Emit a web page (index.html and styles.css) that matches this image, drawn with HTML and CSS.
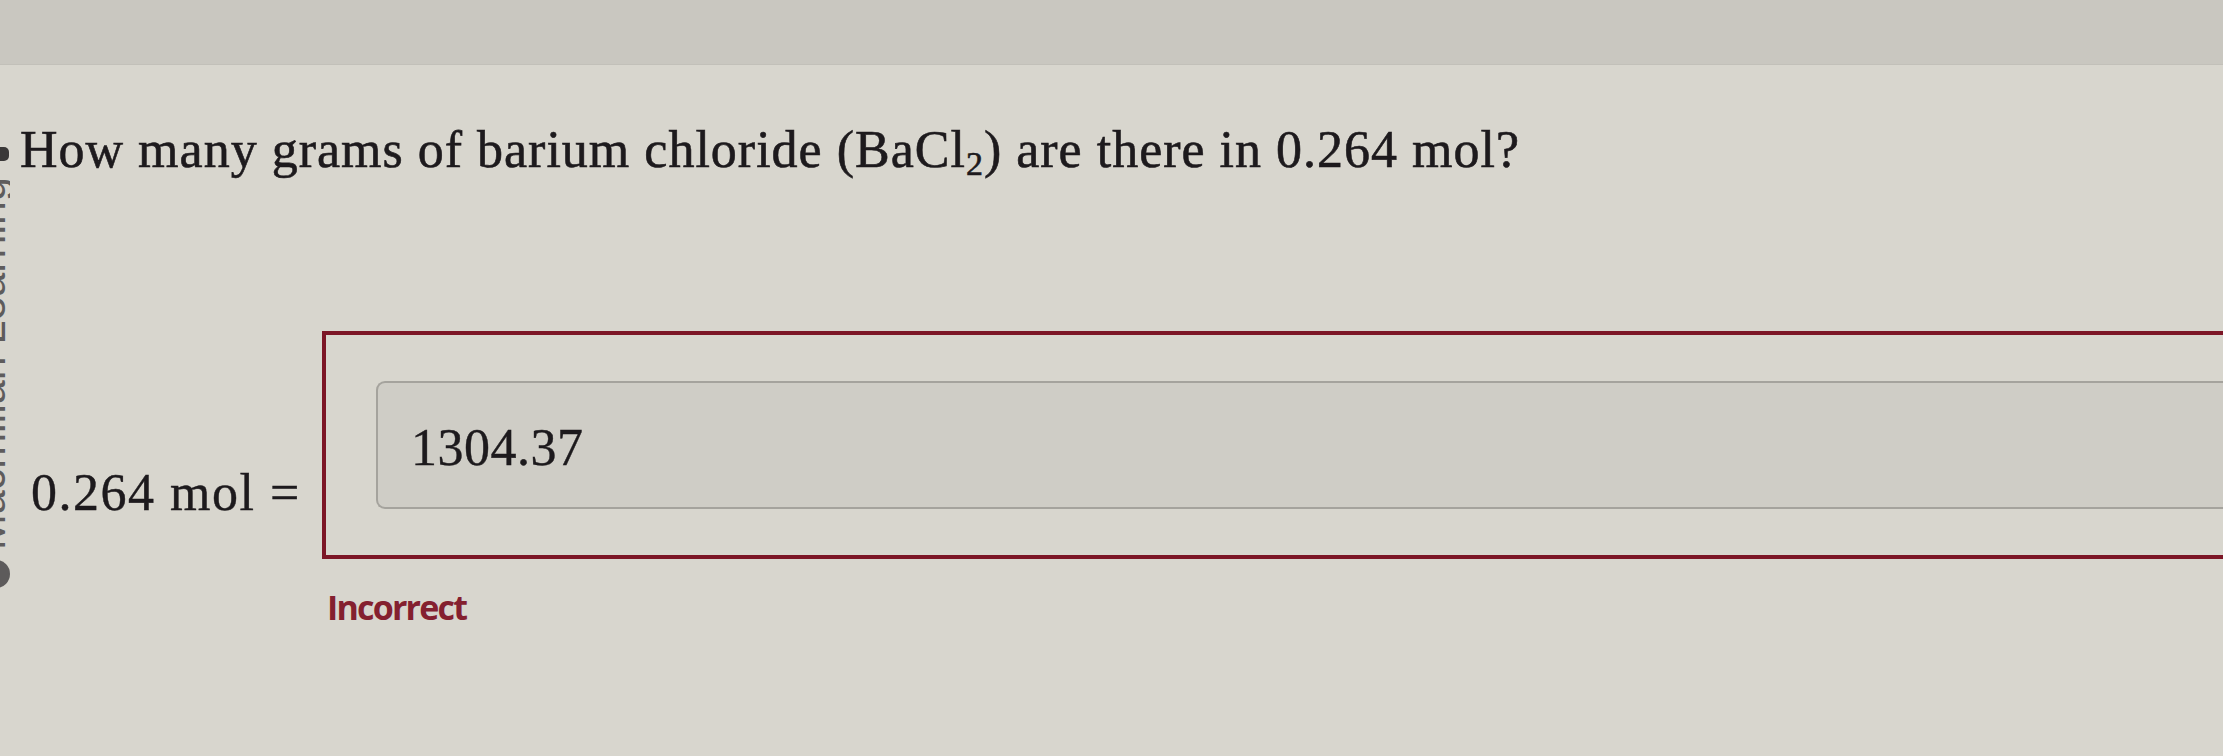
FILE: index.html
```html
<!DOCTYPE html>
<html lang="en">
<head>
<meta charset="utf-8">
<title>Question</title>
<link rel="stylesheet" href="styles.css">
</head>
<body>
<div class="page">
  <div class="topband"></div>
  <div class="content">
    <aside class="edge">
      <span class="edge-mark"></span>
      <span class="edge-text">Macmillan Learning</span>
      <span class="edge-dot"></span>
    </aside>
    <main class="question">
      <p class="prompt">How many grams of barium chloride (BaCl<sub>2</sub>) are there in 0.264 mol?</p>
      <div class="equation">
        <span class="lhs">0.264 mol =</span>
        <div class="answer">
          <div class="answer-box">
            <div class="field">1304.37</div>
          </div>
          <div class="feedback">Incorrect</div>
        </div>
      </div>
    </main>
  </div>
</div>
</body>
</html>
```
FILE: styles.css
```css
html, body {
  margin: 0;
  padding: 0;
  height: 100%;
  overflow: hidden;
  background: #d8d6ce;
}
.page {
  width: 2223px;
  height: 756px;
  overflow: hidden;
  background: #d8d6ce;
  font-family: "Liberation Serif", "Times New Roman", serif;
  color: #1d1a1d;
}
.topband {
  height: 64px;
  background: #c9c7c0;
  border-bottom: 1px solid #c2c0b9;
}
.content {
  display: flex;
  height: 691px;
}
.edge {
  width: 10px;
  flex: none;
  display: flex;
  flex-direction: column;
  align-items: flex-start;
  overflow: hidden;
  padding-top: 82px;
}
.edge-mark {
  width: 9px;
  height: 14px;
  background: #3a3838;
  border-radius: 0 5px 5px 0;
  flex: none;
}
.edge-text {
  writing-mode: vertical-rl;
  transform: rotate(180deg);
  font-family: "Liberation Sans", Arial, sans-serif;
  font-size: 43px;
  line-height: 40px;
  color: #5e5c5c;
  margin-left: -30px;
  margin-top: 9px;
  height: 380px;
  flex: none;
  white-space: nowrap;
}
.edge-dot {
  width: 28px;
  height: 28px;
  border-radius: 50%;
  background: #5d5b5b;
  margin-left: -18px;
  margin-top: 10px;
  flex: none;
}
.question {
  flex: 1;
  padding-left: 10px;
}
.prompt {
  margin: 55px 0 0 0;
  font-size: 52px;
  line-height: 60px;
  letter-spacing: 1px;
  -webkit-text-stroke: 0.6px #1d1a1d;
}
.prompt sub {
  font-size: 34px;
  line-height: 0;
  vertical-align: -8px;
}
.equation {
  display: flex;
  align-items: flex-start;
  margin-top: 151px;
}
.lhs {
  font-size: 52px;
  line-height: 60px;
  margin-top: 132px;
  padding-left: 11px;
  width: 291px;
  flex: none;
  white-space: nowrap;
  letter-spacing: 1.5px;
  -webkit-text-stroke: 0.4px #1d1a1d;
}
.answer {
  flex: 1;
  display: flex;
  flex-direction: column;
}
.answer-box {
  border: 4px solid #7c1626;
  border-right: none;
  margin-right: -40px;
  padding: 46px 0 46px 50px;
}
.field {
  height: 128px;
  background: #cfcdc6;
  border: 2px solid #a5a39d;
  border-right: none;
  border-radius: 9px 0 0 9px;
  box-sizing: border-box;
  padding-left: 33px;
  padding-top: 35px;
  font-size: 52px;
  line-height: 60px;
  letter-spacing: 0.5px;
  -webkit-text-stroke: 0.4px #1d1a1d;
}
.feedback {
  font-family: "Open Sans", "Liberation Sans", sans-serif;
  font-weight: 700;
  font-size: 34px;
  color: #84202f;
  margin-top: 28px;
  padding-left: 5px;
  letter-spacing: -1.8px;
  line-height: 40px;
}
```
